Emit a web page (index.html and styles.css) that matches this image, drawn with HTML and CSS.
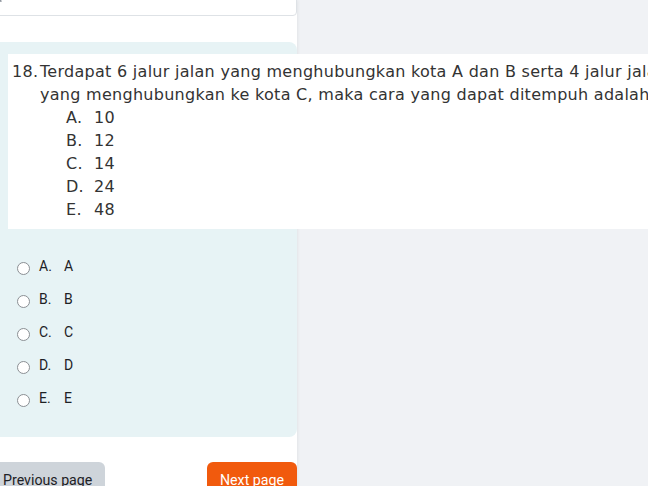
FILE: index.html
```html
<!DOCTYPE html>
<html lang="en">
<head>
  <meta charset="UTF-8">
  <title>Question 18</title>
  <link rel="stylesheet" href="styles.css">
</head>
<body>

  <div class="page">
    <div class="main">

      <!-- Info box (scrolled up) -->
      <div class="info">
        <span class="flag-icon">
          <svg width="10" height="14" viewBox="0 0 10 14"><path d="M1 0 L4 14" stroke="#8f959e" stroke-width="1.4" fill="none"/></svg>
        </span>
        <span class="flag-text">Flag question</span>
      </div>

      <!-- Question -->
      <div class="formulation">
        <div class="qtext">
          <div class="qline">
            <span class="qnum">18.</span>
            <span class="qbody">Terdapat 6 jalur jalan yang menghubungkan kota A dan B serta 4 jalur jalan yang menghubungkan ke kota C, maka cara yang dapat ditempuh adalah</span>
          </div>
          <div class="qopts">
            <div class="qopt"><span class="ql">A.</span><span>10</span></div>
            <div class="qopt"><span class="ql">B.</span><span>12</span></div>
            <div class="qopt"><span class="ql">C.</span><span>14</span></div>
            <div class="qopt"><span class="ql">D.</span><span>24</span></div>
            <div class="qopt"><span class="ql">E.</span><span>48</span></div>
          </div>
        </div>

        <div class="answer">
          <label class="choice"><span class="radio"></span><span class="letter">A.</span><span>A</span></label>
          <label class="choice"><span class="radio"></span><span class="letter">B.</span><span>B</span></label>
          <label class="choice"><span class="radio"></span><span class="letter">C.</span><span>C</span></label>
          <label class="choice"><span class="radio"></span><span class="letter">D.</span><span>D</span></label>
          <label class="choice"><span class="radio"></span><span class="letter">E.</span><span>E</span></label>
        </div>
      </div>

      <!-- Navigation -->
      <div class="nav">
        <button class="btn btn-prev">Previous page</button>
        <button class="btn btn-next">Next page</button>
      </div>

    </div>
  </div>

</body>
</html>
```

FILE: styles.css
```css
body { margin: 0; background: #f0f2f5; font-family: Roboto, "Liberation Sans", sans-serif; overflow: hidden; }
.page { display: flex; height: 486px; }
.main {
  width: 297px;
  flex-shrink: 0;
  background: #fff;
  box-shadow: 1px 0 3px rgba(0, 0, 0, 0.06);
}
.info {
  margin: -17px 0 0 -20px;
  height: 31px;
  border: 1px solid #dee2e6;
  border-bottom-right-radius: 4px;
  display: flex;
  align-items: flex-start;
  gap: 19px;
  padding-left: 16px;
  font-size: 15px;
  line-height: 17px;
}
.flag-icon { padding-top: 4px; }
.flag-text { color: #f15a0d; }

.formulation {
  margin-top: 26px;
  background: #e7f3f5;
  border-radius: 0 8px 8px 0;
  padding: 12px 0 23px 8px;
}
.qtext {
  width: 640px;
  background: #fff;
  padding: 6px 0 8px 4px;
  font-family: "DejaVu Sans", Verdana, sans-serif;
  font-size: 16px;
  letter-spacing: 0.28px;
  line-height: 23px;
  color: #333;
  white-space: nowrap;
  overflow: hidden;
}
.qline { display: flex; }
.qnum { width: 28px; flex-shrink: 0; }
.qbody { white-space: normal; width: 660px; flex-shrink: 0; }
.qopts { padding-left: 54px; }
.qopt { display: flex; }
.ql { width: 28px; }

.answer { padding-top: 20px; }
.choice {
  display: flex;
  align-items: center;
  height: 33px;
  font-size: 14px;
  color: #1d2125;
}
.radio {
  width: 11px;
  height: 11px;
  border: 1px solid #8b8f94;
  border-radius: 50%;
  background: #fff;
  margin: 6px 0 0 9px;
}
.letter { width: 25px; margin-left: 9px; }

.nav {
  display: flex;
  justify-content: space-between;
  margin: 25px 0 0 -10px;
}
.btn {
  font-family: Roboto, sans-serif;
  font-size: 14.2px;
  line-height: 22px;
  padding: 6px 12px;
  border: 1px solid transparent;
  border-radius: 6px;
}
.btn-prev { background: #ced4da; color: #1d2125; }
.btn-next { background: #f15a0d; color: #fff; }
```
